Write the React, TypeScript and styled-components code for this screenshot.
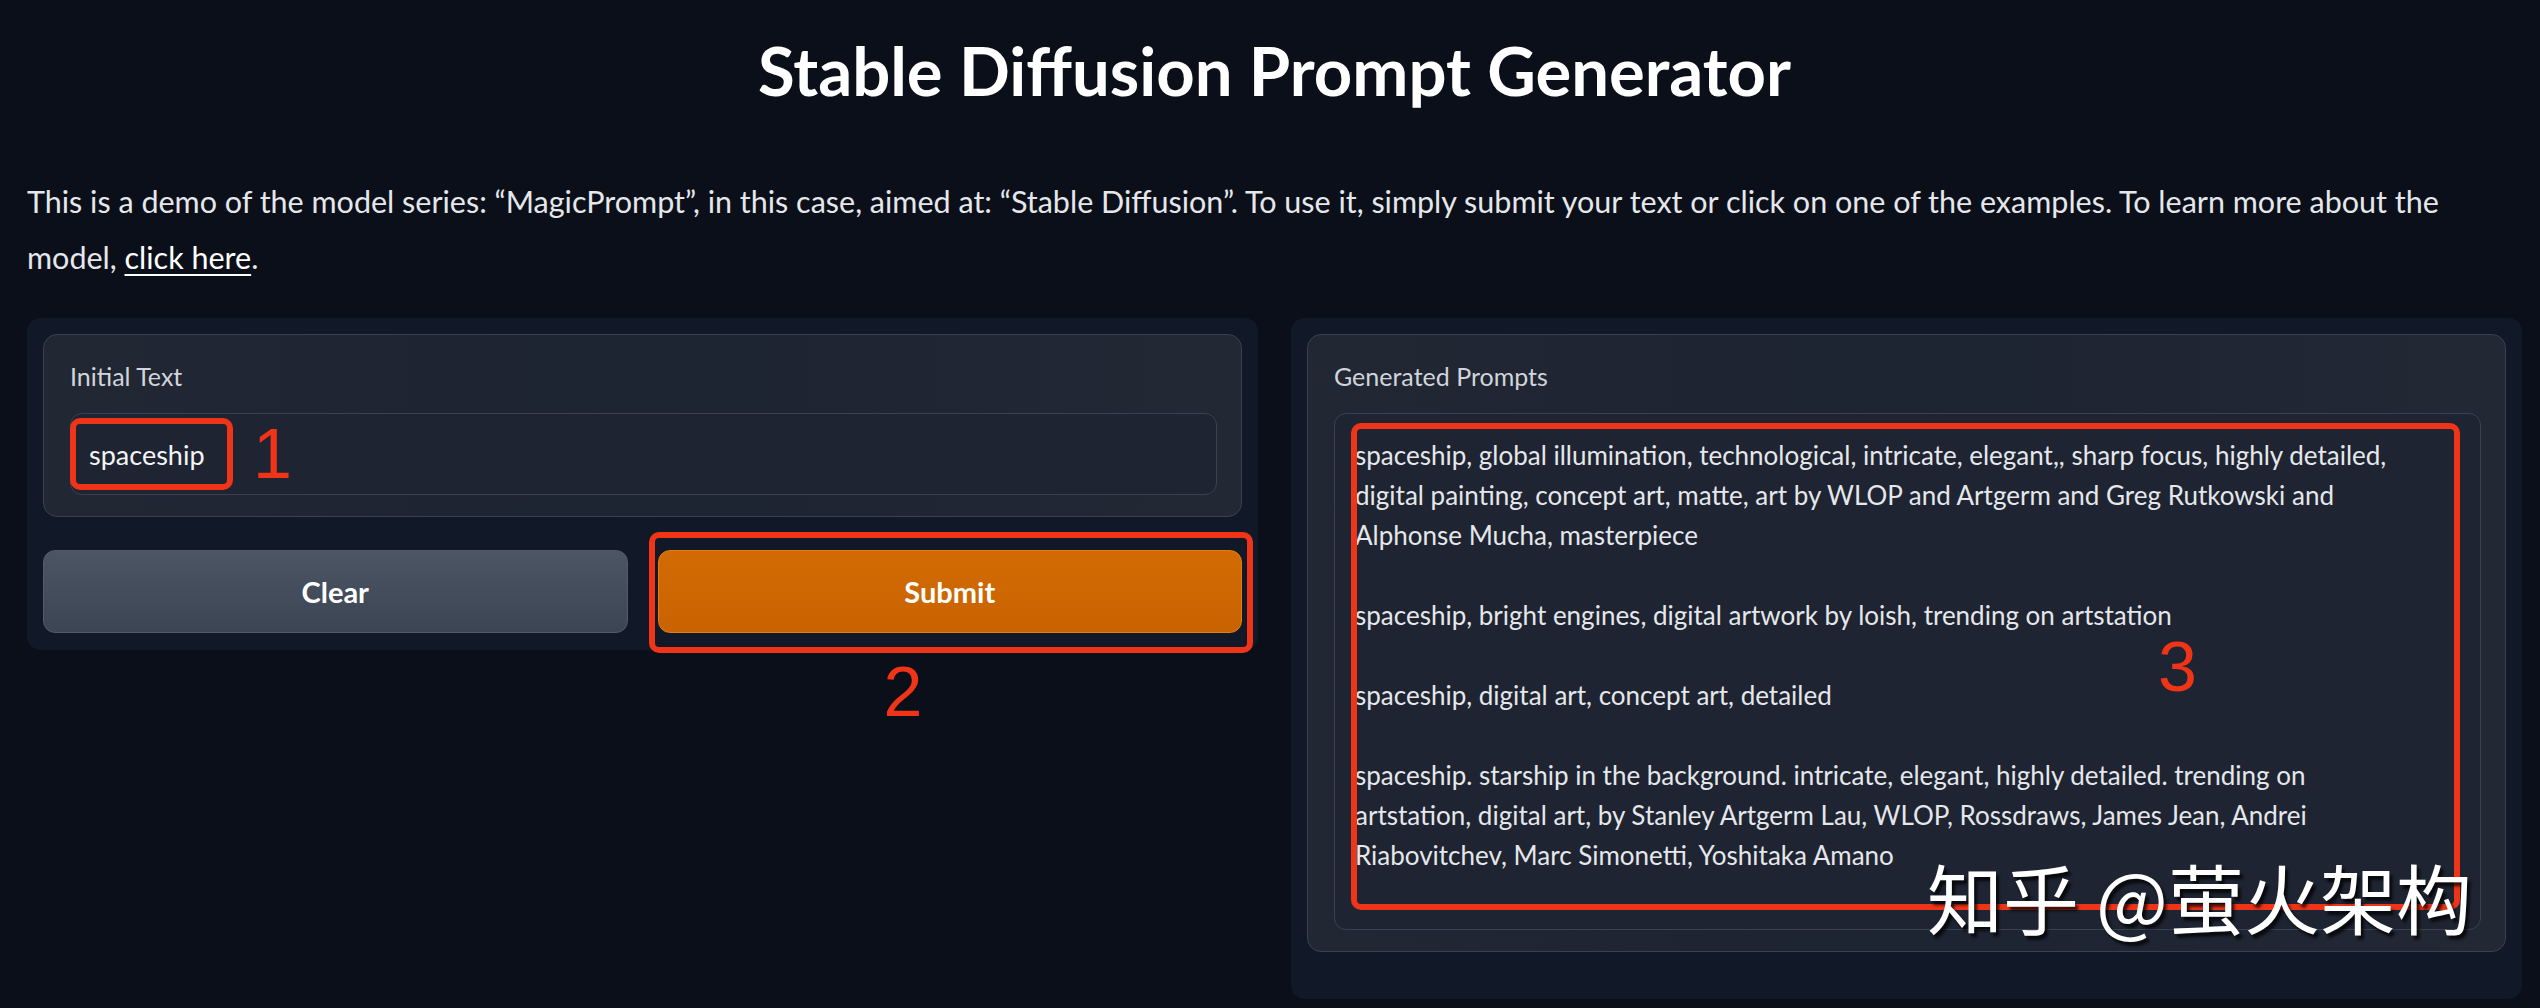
import React from 'react';
import styled, { createGlobalStyle } from 'styled-components';

const Global = createGlobalStyle`
  html, body { margin: 0; padding: 0; background: #0b0f19; }
  body { font-family: Lato, "Noto Sans", sans-serif; color: #e5e7eb; }
  * { box-sizing: border-box; }
`;

const Page = styled.div`
  position: relative;
  width: 2540px;
  height: 1008px;
  overflow: hidden;
  padding: 30px 18px 0 27px;
`;

const Title = styled.h1`
  margin: 0;
  text-align: center;
  font-size: 67px;
  line-height: 80px;
  font-weight: 700;
  color: #ffffff;
`;

const Intro = styled.p`
  margin: 63px 0 33px;
  font-size: 30.5px;
  line-height: 56px;
  color: #e5e7eb;
  white-space: nowrap;
`;

const Link = styled.a`
  color: #ffffff;
  text-decoration: underline;
  text-decoration-thickness: 2px;
  text-underline-offset: 5px;
`;

const Columns = styled.div`
  display: grid;
  grid-template-columns: 1fr 1fr;
  gap: 33px;
  align-items: start;
`;

const Panel = styled.div<{ $bottom: number }>`
  background: #111827;
  border-radius: 14px;
  padding: 16px 16px ${(p) => p.$bottom}px;
`;

const Block = styled.div`
  background: linear-gradient(90deg, #212733 0%, #1d2432 50%, #222834 100%);
  border: 1px solid #3a4252;
  border-radius: 14px;
  padding: 26px 24px 21px 26px;
`;

const Label = styled.div`
  font-size: 25px;
  line-height: 30px;
  color: #d1d5db;
  margin-bottom: 22px;
`;

const Input = styled.div`
  height: 82px;
  display: flex;
  align-items: center;
  gap: 20px;
  background: #1e2431;
  border: 1px solid #3a4252;
  border-radius: 12px;
  font-size: 27px;
  color: #f3f4f6;
`;

const Highlight = styled.span`
  display: flex;
  align-items: center;
  width: 163px;
  height: 72px;
  margin-left: -1px;
  padding-left: 13px;
  border: 6px solid #ef3418;
  border-radius: 10px;
`;

const Output = styled.div`
  position: relative;
  height: 517px;
  padding: 21px 20px;
  background: #1e2431;
  border: 1px solid #3a4252;
  border-radius: 12px;
  font-size: 26px;
  line-height: 40px;
  color: #e5e7eb;
  white-space: pre;
`;

const Buttons = styled.div`
  display: grid;
  grid-template-columns: 1fr 1fr;
  gap: 30px;
  margin-top: 33px;
`;

const Button = styled.div<{ $primary?: boolean }>`
  position: relative;
  height: 83px;
  display: flex;
  align-items: center;
  justify-content: center;
  border-radius: 12px;
  font-size: 29px;
  font-weight: 700;
  color: #ffffff;
  background: ${(p) =>
    p.$primary
      ? 'linear-gradient(180deg, #d26b03 0%, #c96300 100%)'
      : 'linear-gradient(180deg, #4b5563 0%, #3c4553 100%)'};
  border: 1px solid ${(p) => (p.$primary ? '#e37d14' : '#525b69')};
`;

const Mark = styled.div<{ $l: number; $t: number; $w: number; $h: number }>`
  position: absolute;
  left: ${(p) => p.$l}px;
  top: ${(p) => p.$t}px;
  width: ${(p) => p.$w}px;
  height: ${(p) => p.$h}px;
  border: 6px solid #ef3418;
  border-radius: 10px;
  pointer-events: none;
`;

const Num = styled.span`
  font-family: "Liberation Sans", Arial, sans-serif;
  font-size: 70px;
  line-height: 70px;
  font-weight: 400;
  color: #ef3418;
  pointer-events: none;
`;

const FloatNum = styled(Num)<{ $l: number; $t: number }>`
  position: absolute;
  left: ${(p) => p.$l}px;
  top: ${(p) => p.$t}px;
`;

const Watermark = styled.div`
  position: absolute;
  left: 592px;
  top: 444px;
  font-family: "Noto Sans CJK SC", sans-serif;
  font-size: 76px;
  line-height: 76px;
  color: #ffffff;
  white-space: nowrap;
  text-shadow: 3px 4px 3px rgba(0, 0, 0, 0.75);
  pointer-events: none;
`;

const outputText = [
  'spaceship, global illumination, technological, intricate, elegant,, sharp focus, highly detailed,',
  'digital painting, concept art, matte, art by WLOP and Artgerm and Greg Rutkowski and',
  'Alphonse Mucha, masterpiece',
  '',
  'spaceship, bright engines, digital artwork by loish, trending on artstation',
  '',
  'spaceship, digital art, concept art, detailed',
  '',
  'spaceship. starship in the background. intricate, elegant, highly detailed. trending on',
  'artstation, digital art, by Stanley Artgerm Lau, WLOP, Rossdraws, James Jean, Andrei',
  'Riabovitchev, Marc Simonetti, Yoshitaka Amano',
].join('\n');

export default function App() {
  return (
    <>
      <Global />
      <Page>
        <Title>Stable Diffusion Prompt Generator</Title>
        <Intro>
          This is a demo of the model series: “MagicPrompt”, in this case, aimed at: “Stable Diffusion”. To use it, simply
          submit your text or click on one of the examples. To learn more about the
          <br />
          model, <Link>click here</Link>.
        </Intro>
        <Columns>
          <Panel $bottom={17}>
            <Block>
              <Label>Initial Text</Label>
              <Input>
                <Highlight>spaceship</Highlight>
                <Num>1</Num>
              </Input>
            </Block>
            <Buttons>
              <Button>Clear</Button>
              <Button $primary>
                Submit
                <Mark $l={-10} $t={-19} $w={604} $h={121} />
                <FloatNum $l={225} $t={106}>2</FloatNum>
              </Button>
            </Buttons>
          </Panel>
          <Panel $bottom={47}>
            <Block>
              <Label>Generated Prompts</Label>
              <Output>
                {outputText}
                <Mark $l={16} $t={9} $w={1109} $h={487} />
                <FloatNum $l={823} $t={218}>3</FloatNum>
                <Watermark>知乎 @萤火架构</Watermark>
              </Output>
            </Block>
          </Panel>
        </Columns>
      </Page>
    </>
  );
}
